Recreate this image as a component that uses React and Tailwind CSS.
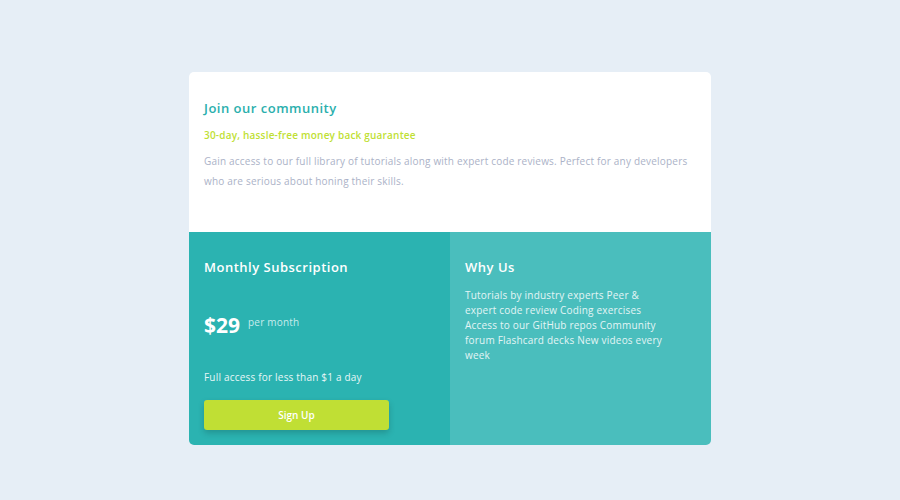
export default function App() {
  return (
    <div className="min-h-screen bg-[#e6eef6] flex justify-center pt-[72px]" style={{ fontFamily: "'Open Sans', sans-serif" }}>
      <div className="w-[522px] h-[373px] rounded-[5px] overflow-hidden flex flex-col">
        <div className="bg-white h-[160px] px-[15px] pt-[26px]">
          <h1 className="text-[13px] font-semibold text-[#2aafad] tracking-[0.5px] leading-[20px]">Join our community</h1>
          <h2 className="mt-[9px] text-[10px] font-semibold text-[#c0df34] tracking-[0.2px] leading-[16px]">30-day, hassle-free money back guarantee</h2>
          <p className="mt-[8px] text-[10px] text-[#abb2c7] tracking-[0.2px] leading-[20px]">
            Gain access to our full library of tutorials along with expert code reviews. Perfect for any developers who are serious about honing their skills.
          </p>
        </div>
        <div className="flex flex-1">
          <div className="w-1/2 bg-[#2bb3b1] px-[15px] pt-[25px] text-white">
            <h3 className="text-[13px] font-semibold tracking-[0.5px] leading-[20px]">Monthly Subscription</h3>
            <div className="mt-[34px] flex items-center gap-[8px]">
              <span className="text-[21px] font-bold leading-[28px]">$29</span>
              <span className="text-[10px] text-[#c8ecec] tracking-[0.2px] -mt-[5px]">per month</span>
            </div>
            <p className="mt-[30px] text-[10px] tracking-[0.2px] leading-[16px] text-[#e8f7f7]">Full access for less than $1 a day</p>
            <button className="mt-[15px] w-[185px] h-[30px] rounded-[3px] bg-[#c0df34] text-white text-[10px] font-semibold shadow-[0_3px_6px_rgba(0,0,0,0.18)]">Sign Up</button>
          </div>
          <div className="w-1/2 bg-[#4abebd] px-[15px] pt-[25px] text-white">
            <h3 className="text-[13px] font-semibold tracking-[0.5px] leading-[20px]">Why Us</h3>
            <p className="mt-[11px] w-[205px] text-[10px] tracking-[0.2px] leading-[15px] text-[#e4f5f5]">
              Tutorials by industry experts Peer &amp; expert code review Coding exercises Access to our GitHub repos Community forum Flashcard decks New videos every week
            </p>
          </div>
        </div>
      </div>
    </div>
  );
}
